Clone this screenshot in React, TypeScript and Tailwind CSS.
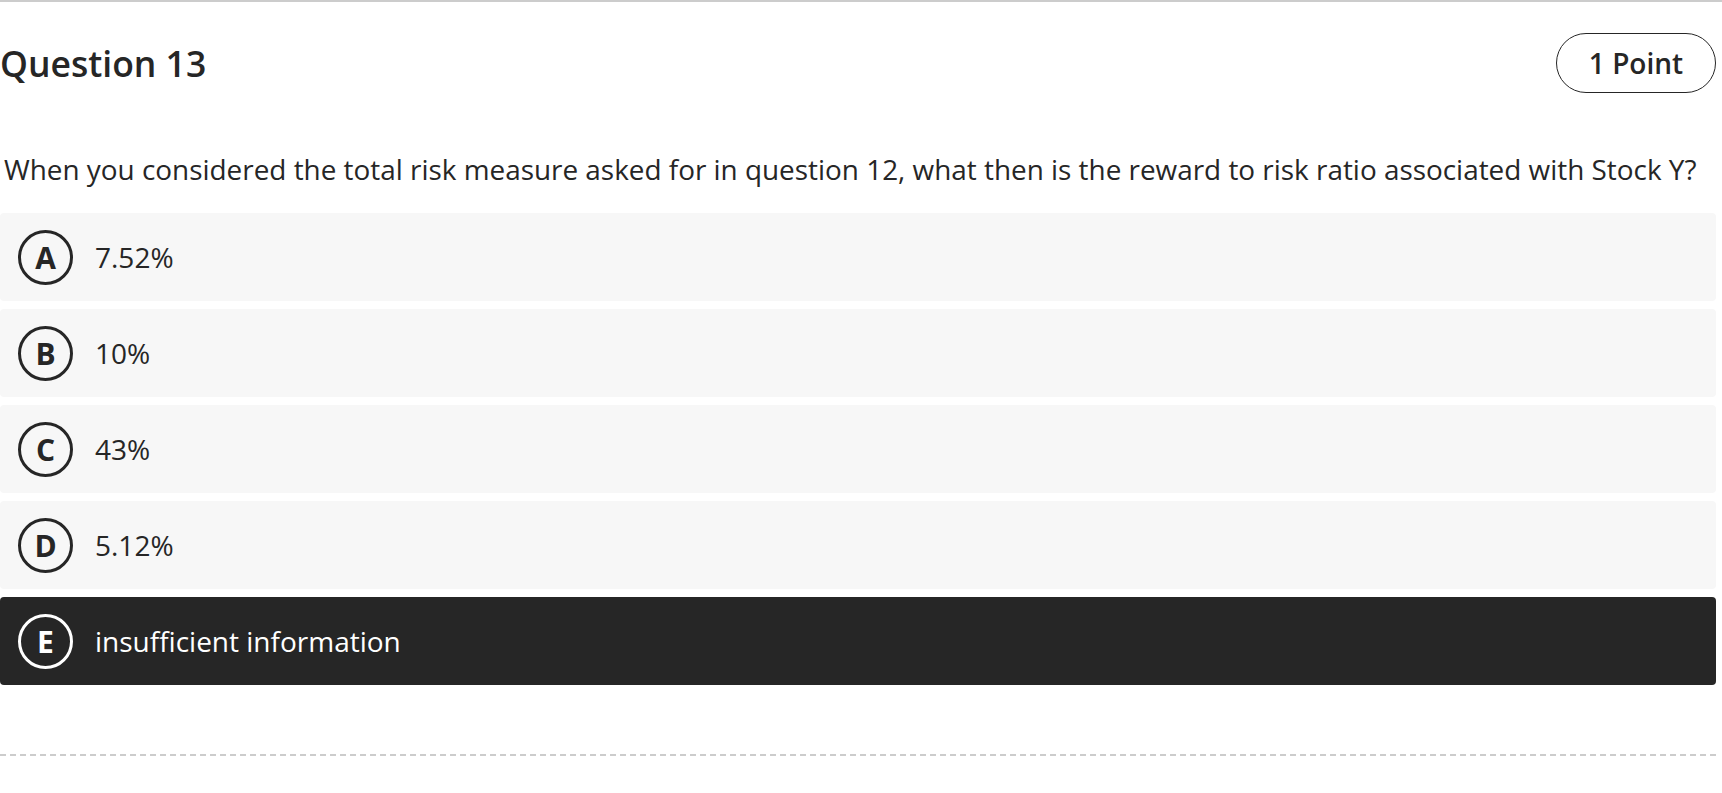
const options = [
  { letter: 'A', text: '7.52%' },
  { letter: 'B', text: '10%' },
  { letter: 'C', text: '43%' },
  { letter: 'D', text: '5.12%' },
  { letter: 'E', text: 'insufficient information', selected: true },
];

function Option({ letter, text, selected }: { letter: string; text: string; selected?: boolean }) {
  return (
    <div
      className={
        selected
          ? 'flex h-[88px] items-center rounded-[4px] bg-[#262626] pl-[18px] text-white'
          : 'flex h-[88px] items-center rounded-[4px] bg-[#f7f7f7] pl-[18px] text-[#262626]'
      }
    >
      <div
        className={
          selected
            ? 'flex h-[55px] w-[55px] items-center justify-center rounded-full border-[3px] border-white text-[30px] font-bold'
            : 'flex h-[55px] w-[55px] items-center justify-center rounded-full border-[3px] border-[#262626] text-[30px] font-bold'
        }
      >
        {letter}
      </div>
      <span className="ml-[22px] text-[28px]">{text}</span>
    </div>
  );
}

export default function App() {
  return (
    <div className="min-h-[793px] bg-white font-['Open_Sans',sans-serif] text-[#262626]">
      <div className="h-[2px] bg-[#cccccc]" />
      <div className="pr-[6px]">
        <div className="flex items-center justify-between pt-[31px]">
          <h2 className="text-[35.5px] font-semibold leading-[1.2]">Question 13</h2>
          <div className="flex h-[60px] w-[160px] items-center justify-center rounded-full border-[1.5px] border-[#262626] text-[28px] font-semibold">
            1 Point
          </div>
        </div>
        <p className="mt-[55px] pl-[4px] text-[27.9px] leading-[42px]">
          When you considered the total risk measure asked for in question 12, what then is the reward to risk ratio associated with Stock Y?
        </p>
        <div className="mt-[23px] flex flex-col gap-[8px]">
          {options.map((o) => (
            <Option key={o.letter} {...o} />
          ))}
        </div>
        <div className="mt-[69px] h-[2px] bg-[repeating-linear-gradient(to_right,#cccccc_0_6px,transparent_6px_10px)]" />
      </div>
    </div>
  );
}
